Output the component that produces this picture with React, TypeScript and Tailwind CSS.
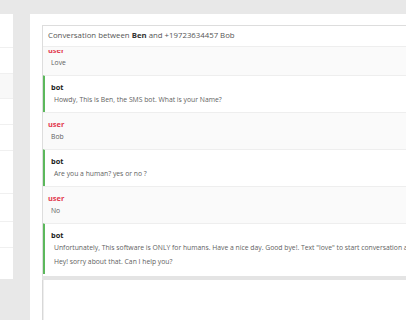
import React from 'react';

type Msg = { from: 'user' | 'bot'; lines: string[] };

const messages: Msg[] = [
  { from: 'user', lines: ['Love'] },
  { from: 'bot', lines: ['Howdy, This is Ben, the SMS bot. What is your Name?'] },
  { from: 'user', lines: ['Bob'] },
  { from: 'bot', lines: ['Are you a human? yes or no ?'] },
  { from: 'user', lines: ['No'] },
  {
    from: 'bot',
    lines: [
      'Unfortunately, This software is ONLY for humans. Have a nice day. Good bye!. Text "love" to start conversation again.',
      'Hey! sorry about that. Can I help you?',
    ],
  },
];

// left list rows (only a sliver of the sidebar is visible)
const sideRows = [
  { h: 'h-[26px]', bg: 'bg-white' },
  { h: 'h-[25px]', bg: 'bg-[#f8f8f8]' },
  { h: 'h-[26px]', bg: 'bg-white' },
  { h: 'h-[26px]', bg: 'bg-white' },
  { h: 'h-[43px]', bg: 'bg-white' },
  { h: 'h-[28px]', bg: 'bg-white' },
  { h: 'h-[26px]', bg: 'bg-white' },
  { h: 'h-[32px]', bg: 'bg-white' },
];

function Row({ msg, first }: { msg: Msg; first?: boolean }) {
  const isBot = msg.from === 'bot';
  return (
    <div
      className={
        'border-t border-[#eee] pt-[5px] pb-[6px] ' +
        (first ? '-mt-[12px] ' : '') +
        (isBot
          ? 'bg-white -ml-px border-l-[3px] border-l-[#5cb85c] pl-[6px]'
          : 'bg-[#fafafa] pl-[5px]')
      }
    >
      <div
        className={
          'text-[7.4px] leading-[12px] font-bold ' +
          (isBot ? 'text-[#222]' : 'text-[#e2384d]')
        }
      >
        {msg.from}
      </div>
      {msg.lines.map((line, i) => (
        <p
          key={i}
          className={
            'pl-[3px] text-[6.8px] leading-[13px] text-[#5f5f5f] whitespace-nowrap ' +
            (i > 0 ? 'mt-px' : '')
          }
        >
          {line}
        </p>
      ))}
    </div>
  );
}

export default function App() {
  return (
    <div
      className="w-[406px] h-[320px] overflow-hidden bg-[#e8e8e8] pt-[14px] flex items-start"
      style={{ fontFamily: '"Open Sans", "Liberation Sans", sans-serif' }}
    >
      <div className="w-[13px] shrink-0 bg-white">
        <div className="h-[33px]" />
        {sideRows.map((r, i) => (
          <div key={i} className={`${r.h} ${r.bg} border-t border-[#f0f0f0]`} />
        ))}
      </div>

      <div className="ml-[17px] w-[560px] shrink-0 h-[306px] bg-white pt-[11px] pl-[12px]">
        <div className="border border-b-0 border-[#ddd]">
          <div className="h-[21px] flex items-center pl-[5px] text-[7.8px] text-[#555] border-b border-[#eee]">
            Conversation between&nbsp;<b className="text-[#333]">Ben</b>&nbsp;and +19723634457 Bob
          </div>
          <div className="h-[3px] bg-[#fafafa]" />
          <div className="h-[226px] overflow-hidden">
            {messages.map((m, i) => (
              <Row key={i} msg={m} first={i === 0} />
            ))}
          </div>
        </div>
        <div className="h-[4px] bg-[#e4e4e4]" />
        <div className="h-[40px] border-l border-[#d8d8d8]">
          <div className="h-full border-l border-[#eee]" />
        </div>
      </div>
    </div>
  );
}
